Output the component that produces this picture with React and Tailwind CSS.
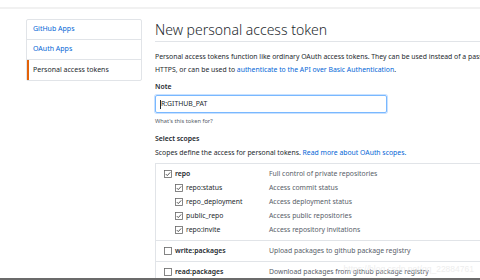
import React from 'react'

const SCOPES = [
  {
    name: 'repo',
    desc: 'Full control of private repositories',
    checked: true,
    children: [
      { name: 'repo:status', desc: 'Access commit status' },
      { name: 'repo_deployment', desc: 'Access deployment status' },
      { name: 'public_repo', desc: 'Access public repositories' },
      { name: 'repo:invite', desc: 'Access repository invitations' },
    ],
  },
  { name: 'write:packages', desc: 'Upload packages to github package registry', checked: false, children: [] },
  { name: 'read:packages', desc: 'Download packages from github package registry', checked: false, children: [] },
]

function Box({ checked }) {
  return (
    <svg width="8" height="8" viewBox="0 0 8 8" className="shrink-0">
      <rect x="0.5" y="0.5" width="7" height="7" fill="#fff" stroke="#666" strokeWidth="0.8" />
      {checked && <path d="M1.8 4.1 L3.3 5.6 L6.2 2.4" fill="none" stroke="#444" strokeWidth="0.9" />}
    </svg>
  )
}

function ScopeRow({ scope, sub }) {
  return (
    <div className="flex items-center h-[14px]">
      <div className={`shrink-0 w-[105px] flex items-center gap-[3px] ${sub ? 'pl-[11px]' : ''}`}>
        <Box checked={sub || scope.checked} />
        <span className={`text-[#24292e] ${sub ? '' : 'font-semibold'}`}>{scope.name}</span>
      </div>
      <span className="text-[#586069] whitespace-nowrap">{scope.desc}</span>
    </div>
  )
}

export default function App() {
  return (
    <div className="w-[480px] h-[280px] overflow-hidden bg-white flex flex-col relative font-['Segoe_UI','Noto_Sans',sans-serif] text-[#24292e]">
      <div className="h-[7px] shrink-0" />
      <div className="h-[2px] bg-[#f1f1f1] shrink-0" />
      <div className="flex-1 min-h-0 flex pl-[26px] pt-[10px] overflow-hidden">
        <nav className="w-[116px] self-start shrink-0 border border-[#e1e4e8] rounded-[2px] text-[7px]">
          <div className="h-[20px] flex items-center px-[6px] text-[#0366d6] border-b border-[#e1e4e8]">GitHub Apps</div>
          <div className="h-[20px] flex items-center px-[6px] text-[#0366d6] border-b border-[#e1e4e8]">OAuth Apps</div>
          <div className="h-[20px] flex items-center px-[4px] text-[#24292e] border-l-2 border-[#e36209]">Personal access tokens</div>
        </nav>

        <main className="ml-[13px] flex-1 min-w-0 text-[6.85px]">
          <h2 className="text-[14px] font-light leading-[22px] border-b border-[#e1e4e8] whitespace-nowrap">
            New personal access token
          </h2>
          <p className="mt-[8px] leading-[13px] whitespace-nowrap">
            Personal access tokens function like ordinary OAuth access tokens. They can be used instead of a password for Git over
            <br />
            HTTPS, or can be used to <span className="text-[#0366d6]">authenticate to the API over Basic Authentication</span>.
          </p>

          <div className="mt-[5px] font-semibold leading-[12px]">Note</div>
          <div className="mt-[2px] w-[232px] h-[18px] border border-[#79b8ff] rounded-[2px] shadow-[0_0_0_1px_#c8e1ff] flex items-center px-[4px]">
            <span className="w-px h-[9px] bg-[#24292e]" />
            <span>R:GITHUB_PAT</span>
          </div>
          <div className="mt-[3px] text-[5.7px] text-[#586069] leading-[10px]">What's this token for?</div>

          <div className="mt-[6px] font-semibold leading-[14px]">Select scopes</div>
          <p className="leading-[14px] whitespace-nowrap">
            Scopes define the access for personal tokens. <span className="text-[#0366d6]">Read more about OAuth scopes.</span>
          </p>

          <div className="mt-[3px] border-t border-l border-[#e1e4e8]">
            {SCOPES.map((s) => (
              <div key={s.name} className="pl-[8px] py-[3px] border-b border-[#e1e4e8]">
                <ScopeRow scope={s} />
                {s.children.map((c) => (
                  <ScopeRow key={c.name} scope={c} sub />
                ))}
              </div>
            ))}
          </div>
        </main>
      </div>
      <div className="absolute right-[6px] bottom-[4px] text-[8.5px] text-[#e6e6e6]/70 whitespace-nowrap font-['Liberation_Sans',sans-serif]">
        https://blog.csdn.net/qq_22884761
      </div>
      <div className="h-[2px] bg-[#6b6b6b] shrink-0" />
    </div>
  )
}
